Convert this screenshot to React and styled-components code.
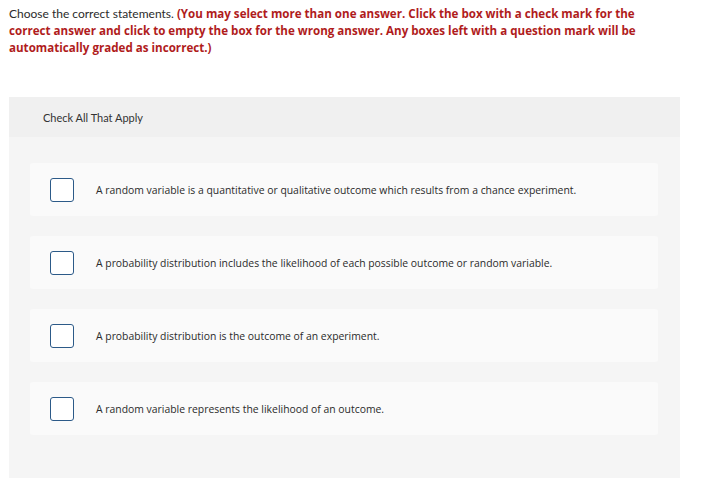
import React from 'react';
import styled, { createGlobalStyle } from 'styled-components';

const GlobalStyle = createGlobalStyle`
  html, body {
    margin: 0;
    padding: 0;
    background: #ffffff;
  }
  body {
    font-family: Lato, 'Liberation Sans', sans-serif;
    color: #333333;
  }
`;

const options = [
    "A random variable is a quantitative or qualitative outcome which results from a chance experiment.",
    "A probability distribution includes the likelihood of each possible outcome or random variable.",
    "A probability distribution is the outcome of an experiment.",
    "A random variable represents the likelihood of an outcome.",
];

const Page = styled.div`
  padding: 5px 36px 0 9px;
`;

const Prompt = styled.p`
  margin: 0;
  font-size: 12px;
  line-height: 17px;
  color: #2b2b2b;
  white-space: nowrap;
`;

const Instruction = styled.strong`
  font-family: 'Open Sans', Lato, sans-serif;
  font-weight: 700;
  font-size: 11.6px;
  color: #b01c1c;
`;

const Panel = styled.section`
  margin-top: 41px;
  background: #f5f5f5;
  padding-bottom: 45px;
`;

const PanelHeader = styled.div`
  height: 40px;
  display: flex;
  align-items: center;
  padding-left: 34px;
  background: #f0f0f0;
  font-size: 11px;
  color: #333333;
`;

const OptionList = styled.div`
  display: flex;
  flex-direction: column;
  gap: 20px;
  padding: 26px 22px 0 21px;
`;

const OptionCard = styled.label`
  height: 53px;
  display: flex;
  align-items: center;
  gap: 22px;
  padding-left: 20px;
  background: #fafafa;
  border-radius: 3px;
  cursor: pointer;
`;

const Box = styled.span`
  width: 24px;
  height: 24px;
  box-sizing: border-box;
  flex: none;
  border: 1.5px solid #2c5a88;
  border-radius: 3px;
  background: #ffffff;
`;

const OptionText = styled.span`
  font-family: 'Open Sans', Lato, sans-serif;
  font-size: 10.4px;
  color: #2b2b2b;
`;

export default function App() {
    return (
        <>
            <GlobalStyle />
            <Page>
                <Prompt>
                    Choose the correct statements.{' '}
                    <Instruction>
                        (You may select more than one answer. Click the box with a check mark for the
                        <br />
                        correct answer and click to empty the box for the wrong answer. Any boxes left with a question mark will be
                        <br />
                        automatically graded as incorrect.)
                    </Instruction>
                </Prompt>
                <Panel>
                    <PanelHeader>Check All That Apply</PanelHeader>
                    <OptionList>
                        {options.map((text, i) => (
                            <OptionCard key={i}>
                                <Box />
                                <OptionText>{text}</OptionText>
                            </OptionCard>
                        ))}
                    </OptionList>
                </Panel>
            </Page>
        </>
    );
}
